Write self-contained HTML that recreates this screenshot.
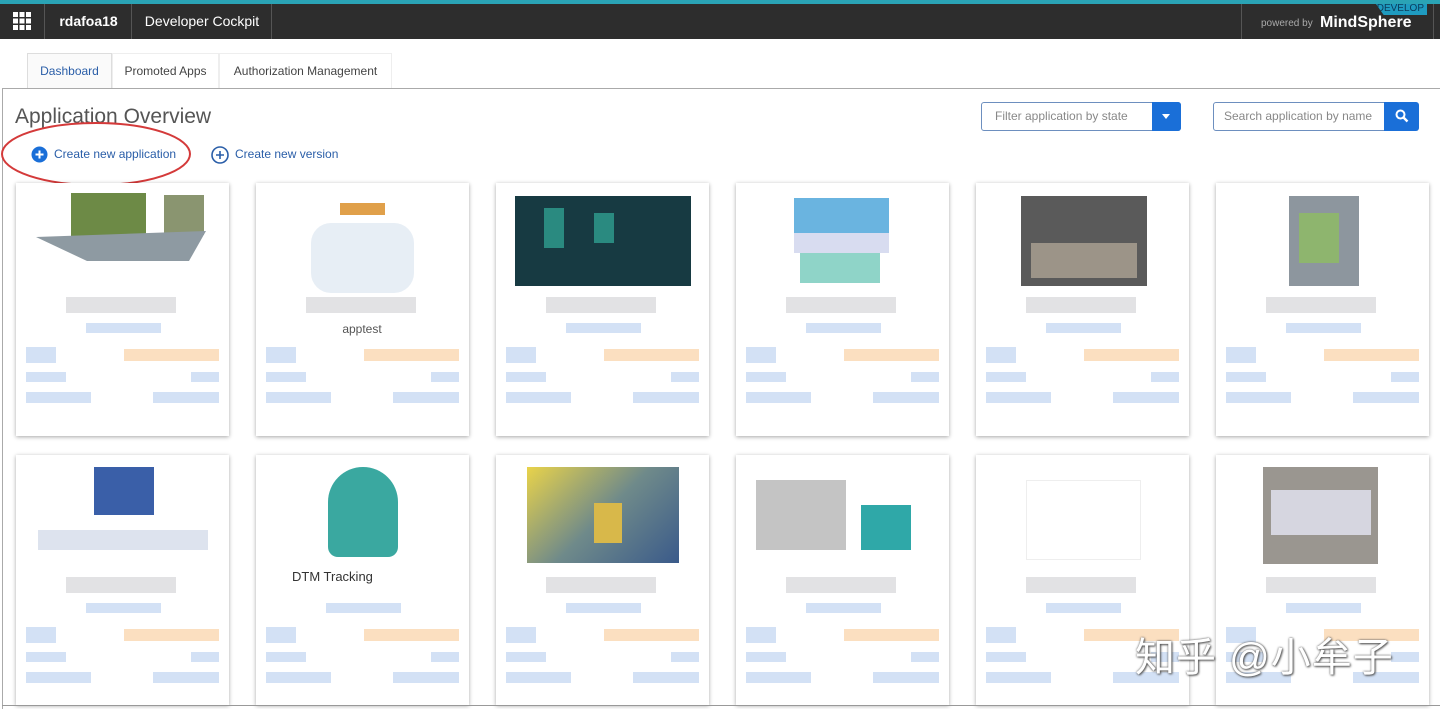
<!DOCTYPE html>
<html><head><meta charset="utf-8">
<style>
*{margin:0;padding:0;box-sizing:border-box}
body{width:1440px;height:709px;overflow:hidden;background:#fff;font-family:"Liberation Sans",sans-serif;position:relative}
.a{position:absolute}
.top{left:0;top:0;width:1440px;height:4px;background:#2aa3b5}
.bar{left:0;top:4px;width:1440px;height:35px;background:#2d2d2d;color:#fff}
.card{position:absolute;width:213px;background:#fff;box-shadow:0 1px 4px rgba(0,0,0,.35)}
.bl{position:absolute;background:#d3e1f5}
.or{position:absolute;background:#fbdfc0}
.gr{position:absolute;background:#e2e2e4}
</style></head><body>
<div class="a top"></div>
<div class="a bar">
 <div class="a" style="left:0;top:0;width:45px;height:35px;border-right:1px solid #555">
  <svg class="a" style="left:13px;top:8px" width="18" height="18" viewBox="0 0 18 18" fill="#fff"><rect x="0" y="0" width="5" height="5"/><rect x="6.5" y="0" width="5" height="5"/><rect x="13" y="0" width="5" height="5"/><rect x="0" y="6.5" width="5" height="5"/><rect x="6.5" y="6.5" width="5" height="5"/><rect x="13" y="6.5" width="5" height="5"/><rect x="0" y="13" width="5" height="5"/><rect x="6.5" y="13" width="5" height="5"/><rect x="13" y="13" width="5" height="5"/></svg>
 </div>
 <div class="a" style="left:46px;top:0;width:86px;height:35px;border-right:1px solid #555;font-size:14px;font-weight:bold;line-height:35px;text-align:center">rdafoa18</div>
 <div class="a" style="left:133px;top:0;width:139px;height:35px;border-right:1px solid #555;font-size:14px;line-height:35px;text-align:center">Developer Cockpit</div>
 <div class="a" style="left:1241px;top:0;width:1px;height:35px;background:#555"></div>
 <div class="a" style="left:1433px;top:0;width:1px;height:35px;background:#555"></div>
 <div class="a" style="left:1376px;top:0;width:51px;height:11px;background:#1f9bc0;clip-path:polygon(0 0,100% 0,100% 100%,15% 100%);font-size:10px;color:#0b3c5a;line-height:10px;text-align:right;padding-right:3px">DEVELOP</div>
 <div class="a" style="left:1261px;top:14px;font-size:10px;color:#aaa">powered by</div>
 <div class="a" style="left:1320px;top:10px;font-size:16px;font-weight:bold">MindSphere</div>
</div>
<div class="a" style="left:27px;top:53px;width:85px;height:36px;border:1px solid #ddd;border-bottom:none;background:#fafafa;font-size:12px;color:#2a5ea8;line-height:35px;text-align:center">Dashboard</div>
<div class="a" style="left:112px;top:53px;width:107px;height:36px;border:1px solid #eee;border-bottom:none;font-size:12px;color:#444;line-height:35px;text-align:center">Promoted Apps</div>
<div class="a" style="left:219px;top:53px;width:173px;height:36px;border:1px solid #eee;border-bottom:none;font-size:12px;color:#444;line-height:35px;text-align:center">Authorization Management</div>
<div class="a" style="left:2px;top:88px;width:1438px;height:1px;background:#aaa"></div>
<div class="a" style="left:2px;top:88px;width:1px;height:621px;background:#aaa"></div>
<div class="a" style="left:15px;top:105px;font-size:21px;color:#555">Application Overview</div>
<svg class="a" style="left:31px;top:146px" width="17" height="17"><circle cx="8.5" cy="8.5" r="8" fill="#1a6fd8"/><path d="M8.5 4.5v8M4.5 8.5h8" stroke="#fff" stroke-width="2"/></svg>
<div class="a" style="left:54px;top:147px;font-size:12px;color:#2a5ea8">Create new application</div>
<svg class="a" style="left:211px;top:146px" width="18" height="18"><circle cx="9" cy="9" r="8" fill="none" stroke="#2a5ea8" stroke-width="1.6"/><path d="M9 5v8M5 9h8" stroke="#2a5ea8" stroke-width="1.6"/></svg>
<div class="a" style="left:235px;top:147px;font-size:12px;color:#2a5ea8">Create new version</div>
<svg class="a" style="left:0;top:118px" width="200" height="72"><ellipse cx="96" cy="36" rx="94" ry="31" fill="none" stroke="#d43a3a" stroke-width="2"/></svg>
<div class="a" style="left:981px;top:102px;width:200px;height:29px;border:1px solid #6d8fbf;border-radius:3px;font-size:12px;color:#888;line-height:27px;padding-left:13px">Filter application by state</div>
<div class="a" style="left:1152px;top:102px;width:29px;height:29px;background:#1a6fd8;border-radius:0 3px 3px 0"><div class="a" style="left:10px;top:12px;border:4px solid transparent;border-top:5px solid #fff"></div></div>
<div class="a" style="left:1213px;top:102px;width:205px;height:29px;border:1px solid #6d8fbf;border-radius:3px;font-size:12px;color:#888;line-height:27px;padding-left:10px">Search application by name</div>
<div class="a" style="left:1384px;top:102px;width:35px;height:29px;background:#1a6fd8;border-radius:0 3px 3px 0">
 <svg class="a" style="left:11px;top:7px" width="14" height="14"><circle cx="5.5" cy="5.5" r="4" fill="none" stroke="#fff" stroke-width="2"/><path d="M8.5 8.5l4 4" stroke="#fff" stroke-width="2.4"/></svg></div>

<div class="card" style="left:16px;top:183px;height:253px">
 <div class="a" style="left:55px;top:10px;width:75px;height:45px;background:#6d8a46"></div>
 <div class="a" style="left:148px;top:12px;width:40px;height:40px;background:#8a9570"></div>
 <div class="a" style="left:20px;top:48px;width:170px;height:30px;background:#8e9aa2;clip-path:polygon(0 20%,100% 0,90% 100%,30% 100%)"></div>
</div>
<div class="card" style="left:256px;top:183px;height:253px">
 <div class="a" style="left:84px;top:20px;width:45px;height:12px;background:#e0a04a"></div>
 <div class="a" style="left:55px;top:40px;width:103px;height:70px;background:#e7eef5;border-radius:20px"></div>
 <div class="a" style="left:66px;top:139px;font-size:12px;color:#555;width:80px;text-align:center">apptest</div>
</div>
<div class="card" style="left:496px;top:183px;height:253px">
 <div class="a" style="left:19px;top:13px;width:176px;height:90px;background:#173a42"></div>
 <div class="a" style="left:48px;top:25px;width:20px;height:40px;background:#2a8a80"></div>
 <div class="a" style="left:98px;top:30px;width:20px;height:30px;background:#2a8a80"></div>
</div>
<div class="card" style="left:736px;top:183px;height:253px">
 <div class="a" style="left:58px;top:15px;width:95px;height:35px;background:#6ab4e0"></div>
 <div class="a" style="left:58px;top:50px;width:95px;height:20px;background:#d8dcf0"></div>
 <div class="a" style="left:64px;top:70px;width:80px;height:30px;background:#8fd4c8"></div>
</div>
<div class="card" style="left:976px;top:183px;height:253px">
 <div class="a" style="left:45px;top:13px;width:126px;height:90px;background:#5a5a5a"></div>
 <div class="a" style="left:55px;top:60px;width:106px;height:35px;background:#9c9488"></div>
</div>
<div class="card" style="left:1216px;top:183px;height:253px">
 <div class="a" style="left:73px;top:13px;width:70px;height:90px;background:#8d969e"></div>
 <div class="a" style="left:83px;top:30px;width:40px;height:50px;background:#8fc25a;opacity:.7"></div>
</div>

<div class="card" style="left:16px;top:455px;height:250px">
 <div class="a" style="left:78px;top:12px;width:60px;height:48px;background:#3a5fa8"></div>
 <div class="a" style="left:22px;top:75px;width:170px;height:20px;background:#c7d0e2;opacity:.6"></div>
</div>
<div class="card" style="left:256px;top:455px;height:250px">
 <div class="a" style="left:72px;top:12px;width:70px;height:90px;background:#3aa8a0;border-radius:35px 35px 10px 10px"></div>
 <div class="a" style="left:36px;top:114px;font-size:13px;color:#333">DTM Tracking</div>
</div>
<div class="card" style="left:496px;top:455px;height:250px">
 <div class="a" style="left:31px;top:12px;width:152px;height:96px;background:linear-gradient(135deg,#e9d34a,#6f8a8a 50%,#3a5a8a)"></div>
 <div class="a" style="left:98px;top:48px;width:28px;height:40px;background:#d8b84a"></div>
</div>
<div class="card" style="left:736px;top:455px;height:250px">
 <div class="a" style="left:20px;top:25px;width:90px;height:70px;background:#c4c4c4"></div>
 <div class="a" style="left:125px;top:50px;width:50px;height:45px;background:#2fa8a8"></div>
</div>
<div class="card" style="left:976px;top:455px;height:250px">
 <div class="a" style="left:50px;top:25px;width:115px;height:80px;border:1px solid #eee"></div>
</div>
<div class="card" style="left:1216px;top:455px;height:250px">
 <div class="a" style="left:47px;top:12px;width:115px;height:97px;background:#9a9690"></div>
 <div class="a" style="left:55px;top:35px;width:100px;height:45px;background:#d6d6e0"></div>
</div>
<div class="a" style="left:2px;top:705px;width:1438px;height:1px;background:#999"></div>

<script>
var tops=[183,455];
tops.forEach(function(t,r){
 for(var i=0;i<6;i++){
  var x=16+240*i, o=r?8:0;
  var h='';
  if(!(r==1&&i==1)) h+='<div class="gr" style="left:'+(x+50)+'px;top:'+(t+114+o)+'px;width:110px;height:16px"></div>';
  if(!(r==0&&i==1)) h+='<div class="bl" style="left:'+(x+70)+'px;top:'+(t+140+o)+'px;width:75px;height:10px"></div>';
  h+='<div class="bl" style="left:'+(x+10)+'px;top:'+(t+164+o)+'px;width:30px;height:16px"></div>';
  h+='<div class="or" style="left:'+(x+108)+'px;top:'+(t+166+o)+'px;width:95px;height:12px"></div>';
  h+='<div class="bl" style="left:'+(x+10)+'px;top:'+(t+189+o)+'px;width:40px;height:10px"></div>';
  h+='<div class="bl" style="left:'+(x+175)+'px;top:'+(t+189+o)+'px;width:28px;height:10px"></div>';
  h+='<div class="bl" style="left:'+(x+10)+'px;top:'+(t+209+o)+'px;width:65px;height:11px"></div>';
  h+='<div class="bl" style="left:'+(x+137)+'px;top:'+(t+209+o)+'px;width:66px;height:11px"></div>';
  document.body.insertAdjacentHTML('beforeend',h);
 }
});
document.body.insertAdjacentHTML('beforeend','<div class="a" style="left:1135px;top:625px;font-family:\'Liberation Sans\',\'Noto Sans CJK SC\',sans-serif;font-size:40px;color:#fff;text-shadow:0 0 2px #555,1px 1px 2px #555;letter-spacing:1px">知乎 @小牟子</div>');
</script>
</body></html>
